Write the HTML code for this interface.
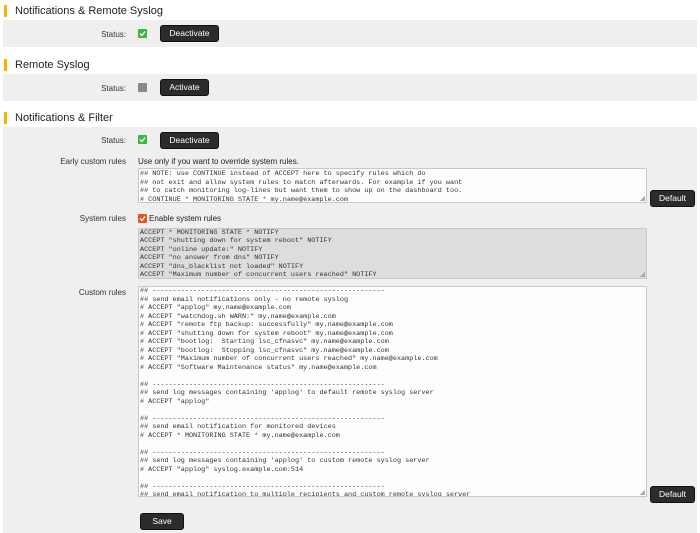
<!DOCTYPE html>
<html><head><meta charset="utf-8"><style>
*{margin:0;padding:0;box-sizing:border-box}
body{width:700px;height:533px;background:#fff;font-family:"Liberation Sans",sans-serif;color:#222;position:relative;overflow:hidden}
svg{display:block}
.h{position:absolute;left:4px;font-size:11px;padding-left:8px;border-left:3px solid #f5b400;line-height:12px;color:#222}
.p{position:absolute;left:3px;width:694px;background:#efefef}
.l{position:absolute;font-size:8px;text-align:right;width:126px;left:0;color:#333}
.cb{position:absolute;width:9px;height:9px;border-radius:1px}
.btn{position:absolute;background:#2b2b2b;color:#fff;font-size:8.5px;text-align:center;border-radius:2px;box-shadow:0 0 0 1px #111;line-height:15px}
.ta{position:absolute;left:138px;width:509px;border:1px solid #c8c8c8;font-family:"Liberation Mono",monospace;font-size:6.8px;line-height:8.5px;padding:1px 1px;white-space:pre;overflow:hidden;color:#333}
.ta::after{content:"";position:absolute;right:1px;bottom:1px;width:5px;height:5px;background:linear-gradient(135deg,transparent 50%,#aaa 50%)}
.t{position:absolute;font-size:8px;color:#222}
</style></head><body>
<div class="h" style="top:5px">Notifications &amp; Remote Syslog</div>
<div class="p" style="top:20px;height:27px"></div>
<div class="l" style="top:30px">Status:</div>
<div class="cb" style="left:138px;top:29px;background:#3fb53f"><svg width="9" height="9"><path d="M2 4.5l2 2 3-4" stroke="#fff" stroke-width="1.3" fill="none"/></svg></div>
<div class="btn" style="left:161px;top:26px;width:57px">Deactivate</div>

<div class="h" style="top:59px">Remote Syslog</div>
<div class="p" style="top:74px;height:27px"></div>
<div class="l" style="top:84px">Status:</div>
<div class="cb" style="left:138px;top:83px;background:#888"></div>
<div class="btn" style="left:161px;top:80px;width:47px">Activate</div>

<div class="h" style="top:112px">Notifications &amp; Filter</div>
<div class="p" style="top:127px;height:406px"></div>
<div class="l" style="top:136px">Status:</div>
<div class="cb" style="left:138px;top:135px;background:#3fb53f"><svg width="9" height="9"><path d="M2 4.5l2 2 3-4" stroke="#fff" stroke-width="1.3" fill="none"/></svg></div>
<div class="btn" style="left:161px;top:133px;width:57px">Deactivate</div>

<div class="l" style="top:157px">Early custom rules</div>
<div class="t" style="left:138px;top:157px">Use only if you want to override system rules.</div>
<div class="ta" style="top:168px;height:35px;background:#fdfdfd">## NOTE: use CONTINUE instead of ACCEPT here to specify rules which do
## not exit and allow system rules to match afterwards. For example if you want
## to catch monitoring log-lines but want them to show up on the dashboard too.
# CONTINUE * MONITORING STATE * my.name@example.com</div>
<div class="btn" style="left:651px;top:191px;width:43px">Default</div>

<div class="l" style="top:214px">System rules</div>
<div class="cb" style="left:138px;top:214px;background:#e8561e"><svg width="9" height="9"><path d="M2 4.5l2 2 3-4" stroke="#fff" stroke-width="1.3" fill="none"/></svg></div>
<div class="t" style="left:149px;top:214px">Enable system rules</div>
<div class="ta" style="top:228px;height:51px;background:#ddd;line-height:8.4px;padding-top:0">ACCEPT * MONITORING STATE * NOTIFY
ACCEPT "shutting down for system reboot" NOTIFY
ACCEPT "online update:" NOTIFY
ACCEPT "no answer from dns" NOTIFY
ACCEPT "dns_blacklist not loaded" NOTIFY
ACCEPT "Maximum number of concurrent users reached" NOTIFY</div>

<div class="l" style="top:288px">Custom rules</div>
<div class="ta" style="top:286px;height:211px;background:#fdfdfd;padding-top:0">## ---------------------------------------------------------
## send email notifications only - no remote syslog
# ACCEPT "applog" my.name@example.com
# ACCEPT "watchdog.sh WARN:" my.name@example.com
# ACCEPT "remote ftp backup: successfully" my.name@example.com
# ACCEPT "shutting down for system reboot" my.name@example.com
# ACCEPT "bootlog:  Starting lsc_cfnasvc" my.name@example.com
# ACCEPT "bootlog:  Stopping lsc_cfnasvc" my.name@example.com
# ACCEPT "Maximum number of concurrent users reached" my.name@example.com
# ACCEPT "Software Maintenance status" my.name@example.com

## ---------------------------------------------------------
## send log messages containing 'applog' to default remote syslog server
# ACCEPT "applog"

## ---------------------------------------------------------
## send email notification for monitored devices
# ACCEPT * MONITORING STATE * my.name@example.com

## ---------------------------------------------------------
## send log messages containing 'applog' to custom remote syslog server
# ACCEPT "applog" syslog.example.com:514

## ---------------------------------------------------------
## send email notification to multiple recipients and custom remote syslog server</div>
<div class="btn" style="left:651px;top:487px;width:43px">Default</div>
<div class="btn" style="left:141px;top:514px;width:42px">Save</div>
</body></html>
